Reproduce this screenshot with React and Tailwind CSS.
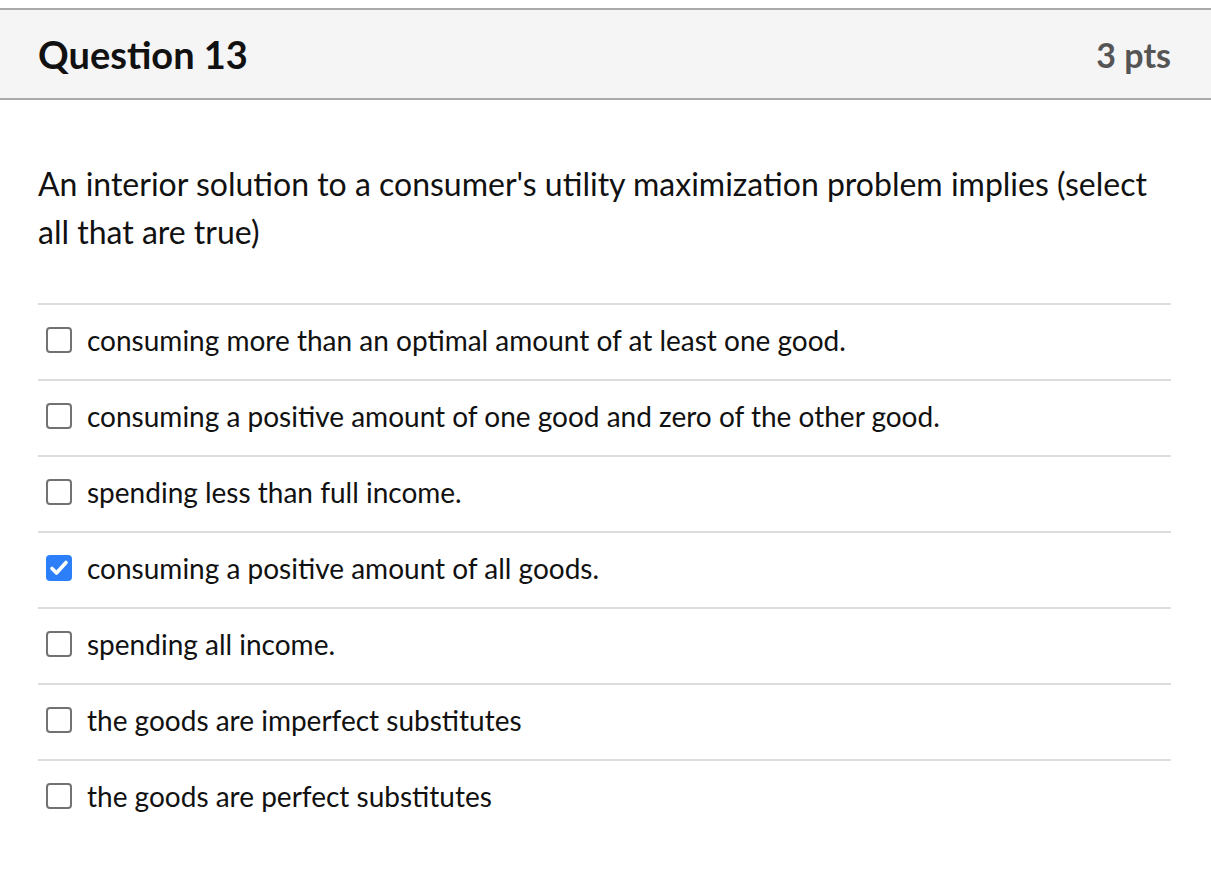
import React from "react"

const answers = [
  { text: "consuming more than an optimal amount of at least one good.", checked: false },
  { text: "consuming a positive amount of one good and zero of the other good.", checked: false },
  { text: "spending less than full income.", checked: false },
  { text: "consuming a positive amount of all goods.", checked: true },
  { text: "spending all income.", checked: false },
  { text: "the goods are imperfect substitutes", checked: false },
  { text: "the goods are perfect substitutes", checked: false },
]

const Box = ({ checked }) =>
  checked ? (
    <span className="flex h-[26px] w-[26px] shrink-0 items-center justify-center rounded-[4px] bg-[#2d7ff9]">
      <svg width="26" height="26" viewBox="0 0 26 26" fill="none">
        <path d="M6 13.5 10.5 18 20 7.5" stroke="white" strokeWidth="3.6" strokeLinecap="round" strokeLinejoin="round" />
      </svg>
    </span>
  ) : (
    <span className="h-[26px] w-[26px] shrink-0 rounded-[4px] border-2 border-[#727272] bg-white" />
  )

export default function App() {
  return (
    <div className="min-h-[875px] bg-white pt-2 text-[#111]" style={{ fontFamily: "Lato, 'Open Sans', sans-serif" }}>
      <div className="flex h-[92px] items-center justify-between border-y-2 border-[#aaa] bg-[#f5f5f5] pl-[38px] pr-[40px]">
        <h2 className="text-[38px] font-bold text-[#111]">Question 13</h2>
        <span className="text-[34px] font-bold text-[#555]">3 pts</span>
      </div>

      <div className="px-[38px] pt-[60px]">
        <p className="text-[32px] leading-[48px]">
          An interior solution to a consumer's utility maximization problem implies (select all that are true)
        </p>

        <div className="mt-[47px] mr-[2px]">
          {answers.map((a, i) => (
            <div key={i} className="flex h-[76px] items-center gap-[15px] border-t-2 border-[#ddd] pb-[4px] pl-[8px]">
              <Box checked={a.checked} />
              <span className="text-[28px]">{a.text}</span>
            </div>
          ))}
        </div>
      </div>
    </div>
  )
}
